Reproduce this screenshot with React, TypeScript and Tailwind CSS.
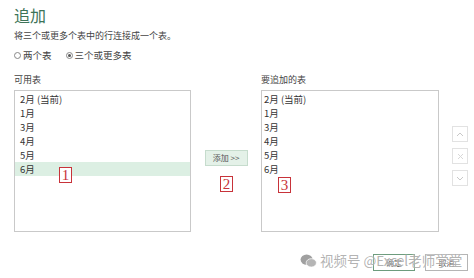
import React from "react";

const items = ["2月 (当前)", "1月", "3月", "4月", "5月", "6月"];

function RedTag({ n }: { n: string }) {
  return (
    <div className="w-[13px] h-[16px] border-[1.5px] border-[#c8333a] flex items-center justify-center text-[#c8333a] text-[15px] leading-none bg-white" style={{ fontFamily: '"Liberation Serif", serif' }}>
      {n}
    </div>
  );
}

function ListBox({ highlight, tag, tagLeft, padL }: { highlight?: boolean; tag: string; tagLeft: number; padL: string }) {
  return (
    <div className="relative h-[142px] border border-[#c9c9c9] bg-white pt-[1px]">
      {items.map((t, i) => (
        <div
          key={t}
          className={`h-[14px] leading-[14px] text-[9.5px] text-[#333] ${padL} ${highlight && i === 5 ? "bg-[#dcefe3]" : ""}`}
        >
          {t}
        </div>
      ))}
      <div className="absolute" style={{ left: tagLeft, top: tag === "1" ? 76 : 86 }}>
        <RedTag n={tag} />
      </div>
    </div>
  );
}

function SideBtn({ children }: { children: React.ReactNode }) {
  return (
    <div className="w-[16px] h-[16px] border border-[#e2e2e2] flex items-center justify-center text-[#c8c8c8]">
      {children}
    </div>
  );
}

export default function App() {
  return (
    <div
      className="relative w-[474px] h-[278px] bg-white overflow-hidden text-[#333]"
      style={{ fontFamily: '"Noto Sans CJK SC", "Noto Sans", sans-serif' }}
    >
      <div className="pl-[14px] pt-[4px]">
        <div className="text-[16px] leading-[22px] text-[#3d7358]">追加</div>
        <div className="mt-[3px] text-[9px] leading-[13px] text-[#444]">将三个或更多个表中的行连接成一个表。</div>
        <div className="mt-[7px] flex items-center h-[13px] text-[9.5px] text-[#444]">
          <span className="w-[7px] h-[7px] rounded-full border border-[#888] mr-[2px]" />
          <span>两个表</span>
          <span className="ml-[14px] w-[7px] h-[7px] rounded-full border border-[#888] mr-[2px] flex items-center justify-center">
            <span className="w-[3px] h-[3px] rounded-full bg-[#555]" />
          </span>
          <span>三个或更多表</span>
        </div>
        <div className="mt-[12px] flex">
          <div className="w-[177px]">
            <div className="text-[9px] leading-[12px] text-[#444]">可用表</div>
            <div className="mt-[4px]">
              <ListBox highlight tag="1" tagLeft={44} padL="pl-[5px]" />
            </div>
          </div>
          <div className="w-[70px] flex flex-col items-center pt-[76px]">
            <div className="w-[43px] h-[16px] border border-[#c6dccd] bg-[#e4f1e8] text-[8px] leading-[14px] text-center text-[#555]">
              添加 &gt;&gt;
            </div>
            <div className="mt-[10px] ml-[1px]">
              <RedTag n="2" />
            </div>
          </div>
          <div className="w-[178px]">
            <div className="text-[9px] leading-[12px] text-[#444]">要追加的表</div>
            <div className="mt-[4px]">
              <ListBox tag="3" tagLeft={16} padL="pl-[2px]" />
            </div>
          </div>
          <div className="ml-[13px] pt-[52px] flex flex-col gap-[6px]">
            <SideBtn>
              <svg width="8" height="5" viewBox="0 0 8 5"><path d="M1 4 L4 1 L7 4" fill="none" stroke="#c8c8c8" strokeWidth="1" /></svg>
            </SideBtn>
            <SideBtn>
              <svg width="7" height="7" viewBox="0 0 7 7"><path d="M1 1 L6 6 M6 1 L1 6" fill="none" stroke="#d8d8d8" strokeWidth="1" /></svg>
            </SideBtn>
            <SideBtn>
              <svg width="8" height="5" viewBox="0 0 8 5"><path d="M1 1 L4 4 L7 1" fill="none" stroke="#c8c8c8" strokeWidth="1" /></svg>
            </SideBtn>
          </div>
        </div>
        <div className="mt-[22px] flex justify-end pr-[6px] gap-[10px]">
          <div className="w-[42px] h-[17px] border border-[#6d9c7d] text-[8px] leading-[15px] text-center text-[#444]">确定</div>
          <div className="w-[43px] h-[17px] border border-[#b5b5b5] text-[8px] leading-[15px] text-center text-[#444]">取消</div>
        </div>
      </div>
      <div className="absolute left-[300px] top-[252px] flex items-center gap-[3px] whitespace-nowrap text-[#a0a0a0]/80" style={{ textShadow: "0 0 2px #fff" }}>
        <svg width="17" height="14" viewBox="0 0 18 15">
          <ellipse cx="7" cy="6" rx="6.5" ry="5.5" fill="#a0a0a0" />
          <ellipse cx="12" cy="9.5" rx="5.5" ry="4.5" fill="#b5b5b5" stroke="#fff" strokeWidth="0.8" />
        </svg>
        <span className="text-[13.5px] leading-[17px]">视频号 @Excel老师学堂</span>
      </div>
    </div>
  );
}
